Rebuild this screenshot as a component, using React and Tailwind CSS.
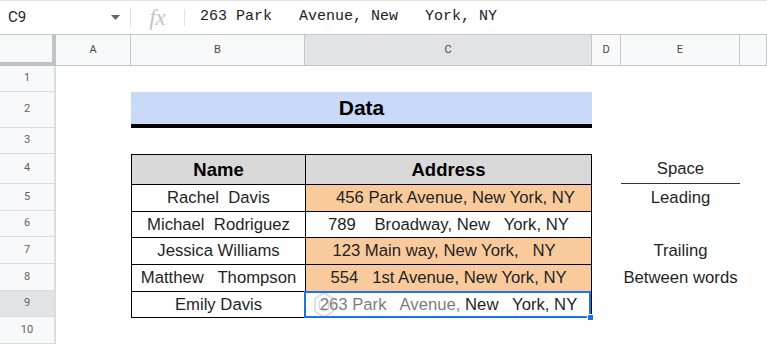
import React from "react";

const rowHeights = [26, 36, 26, 30, 27, 26, 27, 27, 26, 27];

const columns = [
  { label: "A", w: "w-[75px]" },
  { label: "B", w: "w-[174px]" },
  { label: "C", w: "w-[287px]", active: true },
  { label: "D", w: "w-[29px]" },
  { label: "E", w: "w-[119px]" },
  { label: "", w: "flex-1" },
];

const people = [
  { name: "Rachel  Davis", address: "   456 Park Avenue, New York, NY", fill: true },
  { name: "Michael  Rodriguez", address: "789    Broadway, New   York, NY" },
  { name: "Jessica Williams", address: "123 Main way, New York,   NY  ", fill: true },
  { name: "Matthew   Thompson", address: "554   1st Avenue, New York, NY", fill: true },
  { name: "Emily Davis", address: "263 Park   Avenue, New   York, NY", selected: true },
];

const arial = { fontFamily: '"Liberation Sans", Arial, sans-serif' };
const roboto = { fontFamily: 'Roboto, "Noto Sans", sans-serif' };

function FormulaBar() {
  return (
    <div className="flex h-[35px] items-stretch border-t border-b border-t-[#e3e3e3] border-b-[#c7c7c7] bg-white">
      <div className="flex w-[131px] items-center justify-between border-r border-[#e3e3e3] pl-2 pr-[10px] my-[6px]">
        <span className="text-[15px] text-[#202124]" style={roboto}>C9</span>
        <svg width="9" height="5" viewBox="0 0 9 5">
          <path d="M0 0h9L4.5 5z" fill="#5f6368" />
        </svg>
      </div>
      <div className="flex w-[54px] items-center justify-center my-[8px] border-r border-[#e3e3e3]">
        <span className="text-[23px] italic text-[#c4c4c4] leading-none" style={{ fontFamily: '"Liberation Serif", serif' }}>
          fx
        </span>
      </div>
      <div className="flex items-center pl-[15px]">
        <span className="whitespace-pre text-[15px] text-[#202124]" style={{ fontFamily: '"Liberation Mono", monospace' }}>
          263 Park   Avenue, New   York, NY
        </span>
      </div>
    </div>
  );
}

function ColumnHeader() {
  return (
    <div className="flex h-[31px]">
      <div className="w-[56px] border-r-[4px] border-b-[4px] border-[#c2c2c2] bg-[#f8f9fa]" />
      {columns.map((c, i) => (
        <div
          key={i}
          className={`${c.w} flex items-center justify-center border-r border-b border-[#c4c7c5] text-[11px] text-[#444746] ${
            c.active ? "bg-[#e1e3e6]" : "bg-[#f8f9fa]"
          }`}
          style={roboto}
        >
          {c.label}
        </div>
      ))}
    </div>
  );
}

function RowHeaders() {
  return (
    <div className="flex w-[56px] flex-col border-r-2 border-[#dadce0]">
      {rowHeights.map((h, i) => (
        <div
          key={i}
          className={`flex items-center justify-center border-b border-[#dadce0] text-[11px] text-[#5f6368] ${
            i === 8 ? "bg-[#e1e3e6]" : "bg-[#f8f9fa]"
          }`}
          style={{ ...roboto, height: h }}
        >
          {i + 1}
        </div>
      ))}
    </div>
  );
}

function Watermark() {
  return (
    <div className="absolute left-0 top-0 flex h-full w-[154px] items-center bg-white/40 pl-2">
      <svg width="20" height="26" viewBox="0 0 20 26" className="opacity-40">
        <path d="M10 1 19 6.5v13L10 25 1 19.5v-13z" fill="none" stroke="#9aa0a6" strokeWidth="1.6" />
        <path d="M10 7 14.5 9.5v7L10 19 5.5 16.5v-7z" fill="none" stroke="#9aa0a6" strokeWidth="1.4" />
      </svg>
    </div>
  );
}

function DataTable() {
  return (
    <div className="w-[461px] border-x border-t border-black" style={arial}>
      <div className="flex h-[30px] border-b border-black bg-[#d9d9d9] text-[18.5px] font-bold text-black">
        <div className="flex w-[174px] items-center justify-center border-r border-black">Name</div>
        <div className="flex flex-1 items-center justify-center">Address</div>
      </div>
      {people.map((p, i) => (
        <div
          key={i}
          className="flex border-b border-black text-[16.7px] text-[#1f1f1f]"
          style={{ height: rowHeights[4 + i] }}
        >
          <div className="flex w-[174px] items-center justify-center whitespace-pre border-r border-black bg-white">
            {p.name}
          </div>
          <div
            className={`relative flex flex-1 items-center justify-center whitespace-pre ${
              p.fill ? "bg-[#f9cb9c]" : "bg-white"
            }`}
          >
            {p.address}
            {p.selected && (
              <>
                <Watermark />
                <div className="absolute -left-[2px] -top-[1px] -bottom-[1px] right-0 border-2 border-[#1a73e8]" />
                <div className="absolute -bottom-[4px] -right-[3px] h-[7px] w-[7px] border border-white bg-[#1a73e8]" />
              </>
            )}
          </div>
        </div>
      ))}
    </div>
  );
}

function LabelColumn() {
  const labels = ["Leading", "", "Trailing", "Between words", ""];
  return (
    <div className="w-[119px] text-[16.7px] text-[#1f1f1f]" style={arial}>
      <div className="flex h-[30px] items-center justify-center border-b border-[#333]">Space</div>
      {labels.map((l, i) => (
        <div key={i} className="flex items-center justify-center whitespace-nowrap" style={{ height: rowHeights[4 + i] }}>
          {l}
        </div>
      ))}
    </div>
  );
}

export default function App() {
  return (
    <div className="h-[345px] w-[767px] overflow-hidden bg-white">
      <FormulaBar />
      <ColumnHeader />
      <div className="flex">
        <RowHeaders />
        <div className="flex-1">
          <div className="h-[26px]" />
          <div className="flex h-[36px]">
            <div className="w-[75px]" />
            <div className="flex w-[461px] flex-col">
              <div className="flex flex-1 items-center justify-center bg-[#c9daf8] text-[21px] font-bold text-black" style={arial}>
                Data
              </div>
              <div className="h-[4px] bg-black" />
            </div>
          </div>
          <div className="h-[26px]" />
          <div className="flex">
            <div className="w-[75px]" />
            <DataTable />
            <div className="w-[29px]" />
            <LabelColumn />
          </div>
        </div>
      </div>
    </div>
  );
}
